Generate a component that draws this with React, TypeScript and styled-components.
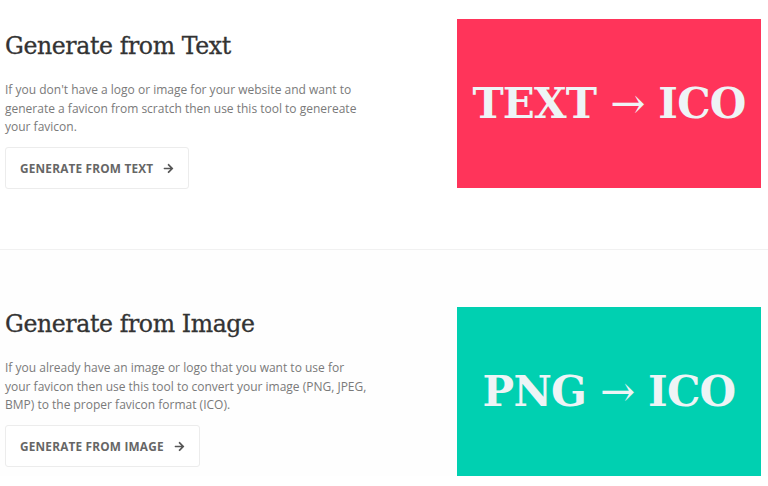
import React from "react"
import styled, { createGlobalStyle } from "styled-components"
import { FaArrowRight } from "react-icons/fa"

const GlobalStyle = createGlobalStyle`
  body {
    margin: 0;
    background: #ffffff;
    font-family: "Open Sans", "Noto Sans", sans-serif;
  }
`

interface Tool {
  title: string
  text: string
  button: string
  from: string
  color: string
}

const tools: Tool[] = [
  {
    title: "Generate from Text",
    text: "If you don't have a logo or image for your website and want to generate a favicon from scratch then use this tool to genereate your favicon.",
    button: "Generate from Text",
    from: "TEXT",
    color: "#ff345a",
  },
  {
    title: "Generate from Image",
    text: "If you already have an image or logo that you want to use for your favicon then use this tool to convert your image (PNG, JPEG, BMP) to the proper favicon format (ICO).",
    button: "Generate from Image",
    from: "PNG",
    color: "#00d0b1",
  },
]

const Page = styled.div`
  width: 768px;
  height: 486px;
  overflow: hidden;
`

const Section = styled.section<{ $first?: boolean }>`
  display: flex;
  align-items: flex-start;
  justify-content: space-between;
  height: ${p => (p.$first ? "249px" : "auto")};
  padding: ${p => (p.$first ? "19px 7px 0 5px" : "57px 7px 0 5px")};
  box-sizing: border-box;
  background: ${p => (p.$first ? "#ffffff" : "#fefefe")};
  border-top: ${p => (p.$first ? "none" : "1px solid #f1f1f1")};
`

const Info = styled.div<{ $top: number }>`
  width: 400px;
  padding-top: ${p => p.$top}px;
`

const Title = styled.h2`
  margin: 0;
  font-family: "DejaVu Serif", serif;
  font-weight: normal;
  font-size: 23.6px;
  line-height: 30px;
  color: #333333;
  letter-spacing: -0.4px;
  -webkit-text-stroke: 0.3px #333333;
`

const Text = styled.p`
  margin: 20px 0 0;
  font-size: 12px;
  line-height: 18.7px;
  color: #7a7a7a;
  max-width: 366px;
`

const Button = styled.a`
  display: inline-flex;
  align-items: center;
  gap: 10px;
  margin-top: 10px;
  height: 42px;
  padding: 0 14px;
  box-sizing: border-box;
  border: 1px solid #ececec;
  border-radius: 3px;
  background: #ffffff;
  font-size: 11.8px;
  font-weight: 700;
  letter-spacing: 0.2px;
  text-transform: uppercase;
  color: #666666;
  text-decoration: none;

  svg {
    font-size: 11px;
    color: #555555;
  }
`

const Badge = styled.div<{ $color: string }>`
  display: flex;
  align-items: center;
  justify-content: center;
  width: 304px;
  height: 169px;
  background: ${p => p.$color};
  font-family: "DejaVu Serif", serif;
  font-weight: 700;
  font-size: 42px;
  color: #eef4f6;
  letter-spacing: -0.8px;
  white-space: nowrap;
`

const Arrow = styled.span`
  font-weight: 400;
`

export default function App() {
  return (
    <Page>
      <GlobalStyle />
      {tools.map((tool, i) => (
        <Section key={tool.title} $first={i === 0}>
          <Info $top={i === 0 ? 12 : 2}>
            <Title>{tool.title}</Title>
            <Text>{tool.text}</Text>
            <Button href="#">
              {tool.button}
              <FaArrowRight />
            </Button>
          </Info>
          <Badge $color={tool.color}>
            {tool.from}&nbsp;<Arrow>→</Arrow>&nbsp;ICO
          </Badge>
        </Section>
      ))}
    </Page>
  )
}
